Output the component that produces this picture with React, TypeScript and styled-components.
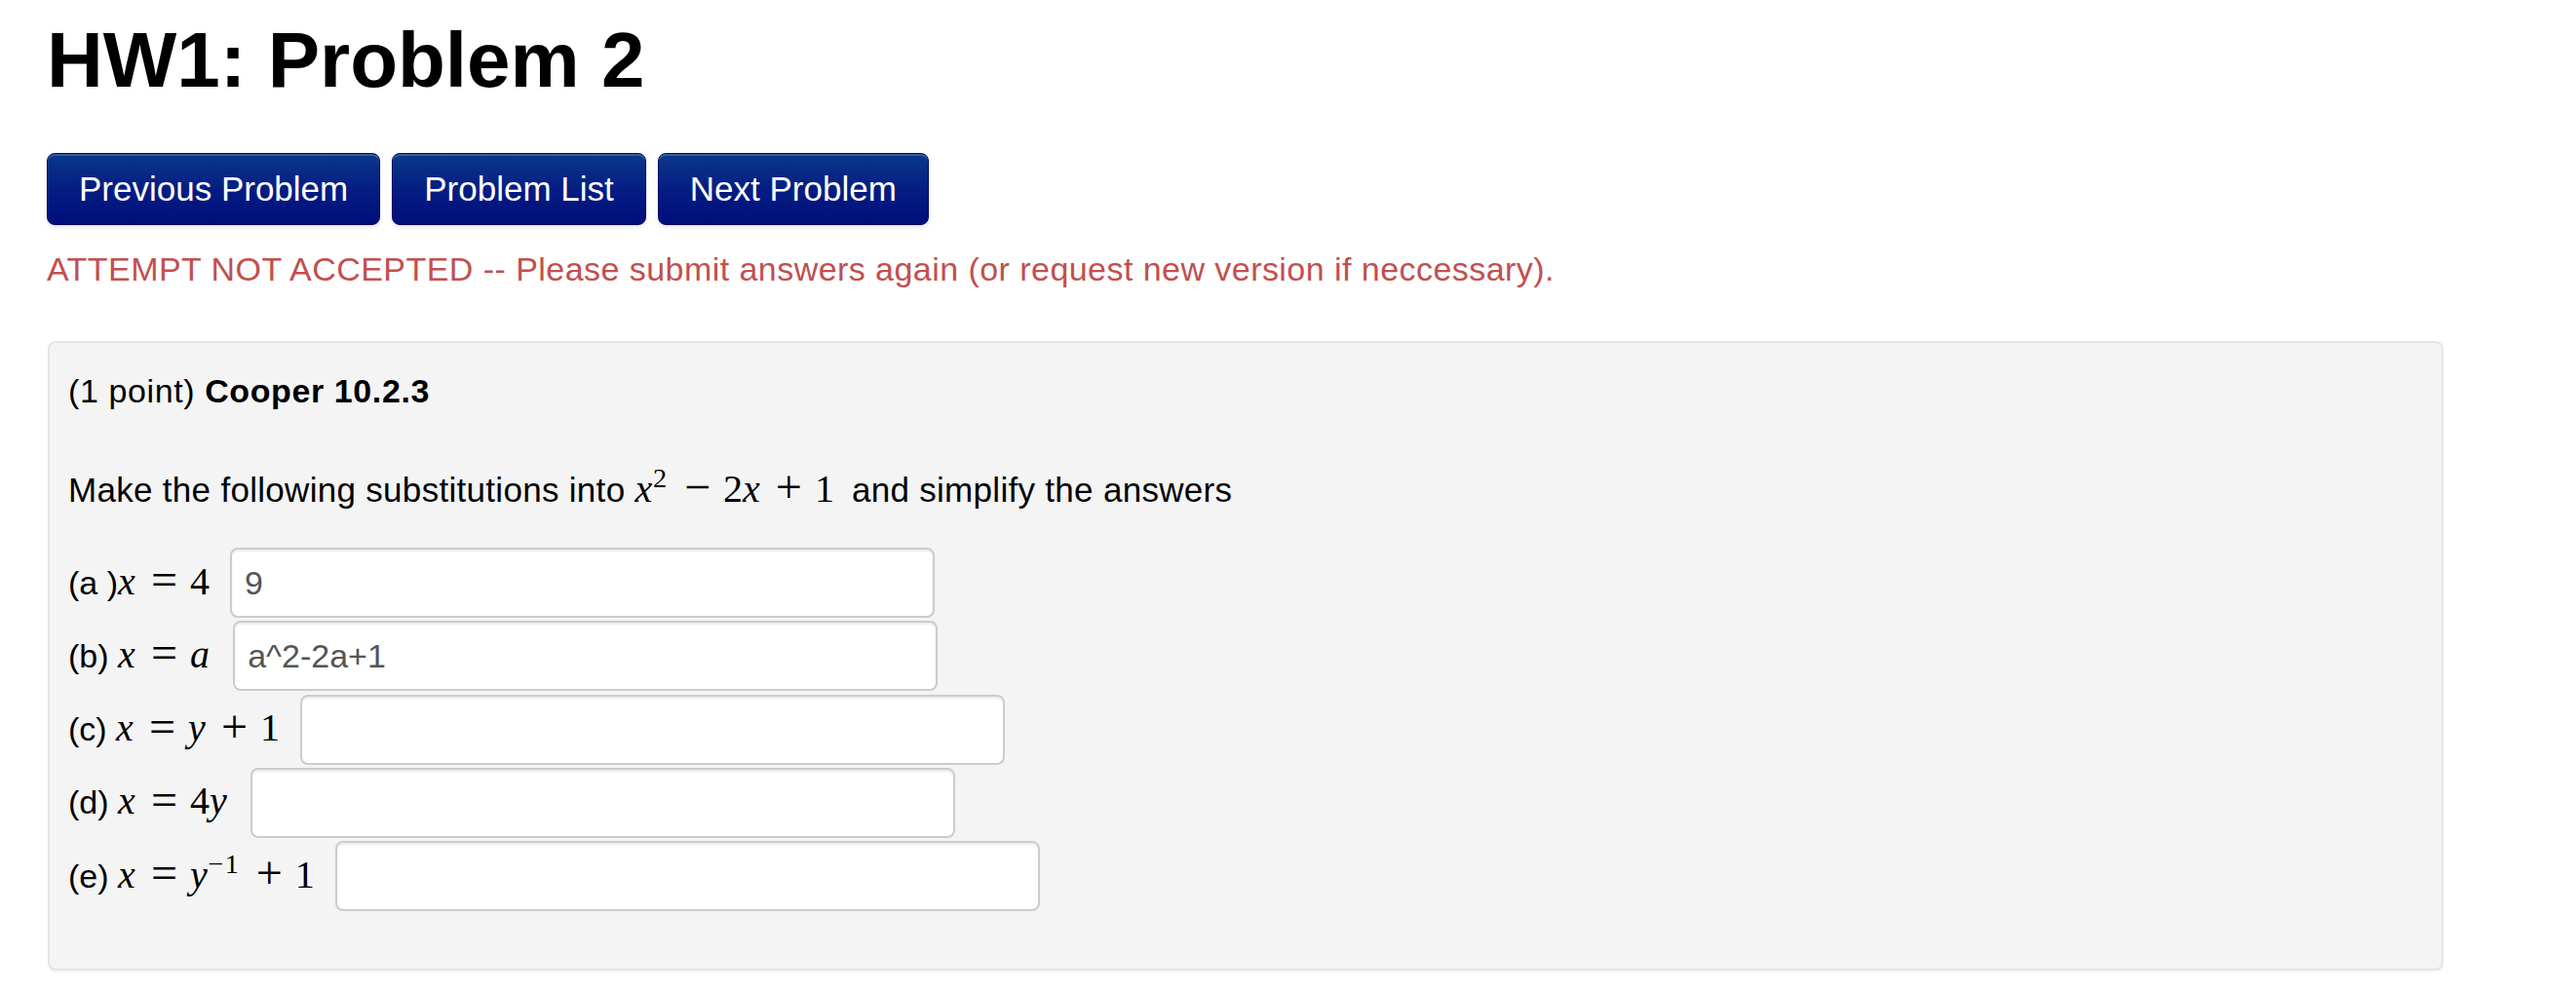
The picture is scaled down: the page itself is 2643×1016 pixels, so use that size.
import React from "react";
import styled, { createGlobalStyle } from "styled-components";

const GlobalStyle = createGlobalStyle`
  html, body {
    margin: 0;
    padding: 0;
    background: #fff;
  }
  body {
    font-family: "Liberation Sans", Arial, Helvetica, sans-serif;
    color: #000;
  }
`;

const Page = styled.div`
  padding: 22px 136px 40px 48px;
`;

const Title = styled.h1`
  margin: 0;
  font-size: 80px;
  line-height: 80px;
  font-weight: 700;
`;

const Nav = styled.div`
  display: flex;
  gap: 12px;
  margin-top: 55px;
`;

const NavButton = styled.button`
  height: 74px;
  padding: 0 32px;
  border: 1px solid #000a66;
  border-radius: 8px;
  background: linear-gradient(to bottom, #0b388a 0%, #051d82 50%, #000e7c 100%);
  box-shadow: inset 0 2px 0 rgba(255, 255, 255, 0.18), 0 2px 4px rgba(0, 0, 0, 0.12);
  color: #fff;
  font-family: "Liberation Sans", Arial, sans-serif;
  font-size: 35px;
  line-height: 72px;
  cursor: pointer;
`;

const ErrorLine = styled.div`
  margin-top: 21px;
  font-size: 34px;
  line-height: 48px;
  letter-spacing: 0.45px;
  color: #c24f4f;
`;

const Well = styled.div`
  margin: 50px 0 0 1px;
  padding: 28px 19px 59px;
  background: #f4f4f4;
  border: 2px solid #e5e5e5;
  border-radius: 8px;
  box-shadow: 0 2px 2px rgba(0, 0, 0, 0.04);
`;

const Header = styled.div`
  font-size: 34px;
  line-height: 42px;
  letter-spacing: 0.6px;

  b {
    font-weight: 700;
  }
`;

const Statement = styled.div`
  margin-top: 60px;
  font-size: 35px;
  line-height: 42px;
  letter-spacing: 0.3px;
  white-space: nowrap;
`;

const Rows = styled.div`
  display: flex;
  flex-direction: column;
  gap: 3.3px;
  margin-top: 38px;
`;

const Row = styled.div`
  display: flex;
  align-items: baseline;
`;

const Label = styled.span`
  font-size: 34px;
  line-height: 42px;
  white-space: nowrap;
`;

const AnswerInput = styled.input`
  box-sizing: border-box;
  width: 723px;
  height: 72px;
  margin-left: 21px;
  padding: 0 13px;
  border: 2px solid #cccccc;
  border-radius: 8px;
  background: #fff;
  box-shadow: inset 0 2px 2px rgba(0, 0, 0, 0.075);
  font-family: "Liberation Sans", Arial, sans-serif;
  font-size: 34px;
  color: #555;
  outline: none;
`;

/* math pieces, sized to mimic the TeX font widths */
const Math = styled.span<{ $trail?: boolean }>`
  font-family: "Liberation Serif", "DejaVu Serif", "Times New Roman", serif;
  font-size: 40px;
  line-height: 1;
  letter-spacing: 0;
  white-space: nowrap;
  margin-right: ${(p) => (p.$trail ? "0.2em" : "0")};
`;

const MI = styled.i<{ $tight?: boolean }>`
  font-style: italic;
  padding-right: ${(p) => (p.$tight ? "0.02em" : "0.08em")};
`;

const MN = styled.span``;

const MO = styled.span`
  display: inline-block;
  position: relative;
  top: 0.03em;
  font-size: 1.2em;
  line-height: 0;
  margin: 0 0.27em;
`;

const Sup = styled.span`
  position: relative;
  top: -0.52em;
  font-size: 0.707em;
  letter-spacing: 0.05em;
  padding-right: 0.12em;
`;

type Part = { kind: "i" | "n" | "op"; text: string; sup?: string };

function Formula({ parts, trail }: { parts: Part[]; trail?: boolean }) {
  return (
    <Math $trail={trail}>
      {parts.map((p, i) => {
        let node: React.ReactNode;
        if (p.kind === "i") node = <MI $tight={!!p.sup}>{p.text}</MI>;
        else if (p.kind === "n") node = <MN>{p.text}</MN>;
        else node = <MO>{p.text}</MO>;
        return (
          <React.Fragment key={i}>
            {node}
            {p.sup && <Sup>{p.sup}</Sup>}
          </React.Fragment>
        );
      })}
    </Math>
  );
}

const x: Part = { kind: "i", text: "x" };
const eq: Part = { kind: "op", text: "=" };
const plus: Part = { kind: "op", text: "+" };

const rows: { label: string; parts: Part[]; value: string }[] = [
  { label: "(a )", parts: [x, eq, { kind: "n", text: "4" }], value: "9" },
  { label: "(b) ", parts: [x, eq, { kind: "i", text: "a" }], value: "a^2-2a+1" },
  { label: "(c) ", parts: [x, eq, { kind: "i", text: "y" }, plus, { kind: "n", text: "1" }], value: "" },
  { label: "(d) ", parts: [x, eq, { kind: "n", text: "4" }, { kind: "i", text: "y" }], value: "" },
  {
    label: "(e) ",
    parts: [x, eq, { kind: "i", text: "y", sup: "\u22121" }, plus, { kind: "n", text: "1" }],
    value: "",
  },
];

export default function App() {
  return (
    <Page>
      <GlobalStyle />
      <Title>HW1: Problem 2</Title>
      <Nav>
        <NavButton>Previous Problem</NavButton>
        <NavButton>Problem List</NavButton>
        <NavButton>Next Problem</NavButton>
      </Nav>
      <ErrorLine>
        ATTEMPT NOT ACCEPTED -- Please submit answers again (or request new version if neccessary).
      </ErrorLine>
      <Well>
        <Header>
          (1 point) <b>Cooper 10.2.3</b>
        </Header>
        <Statement>
          Make the following substitutions into{" "}
          <Formula
            trail
            parts={[
              { kind: "i", text: "x", sup: "2" },
              { kind: "op", text: "\u2212" },
              { kind: "n", text: "2" },
              x,
              plus,
              { kind: "n", text: "1" },
            ]}
          />{" "}
          and simplify the answers
        </Statement>
        <Rows>
          {rows.map((r) => (
            <Row key={r.label}>
              <Label>
                {r.label}
                <Formula parts={r.parts} />
              </Label>
              <AnswerInput type="text" defaultValue={r.value} />
            </Row>
          ))}
        </Rows>
      </Well>
    </Page>
  );
}
